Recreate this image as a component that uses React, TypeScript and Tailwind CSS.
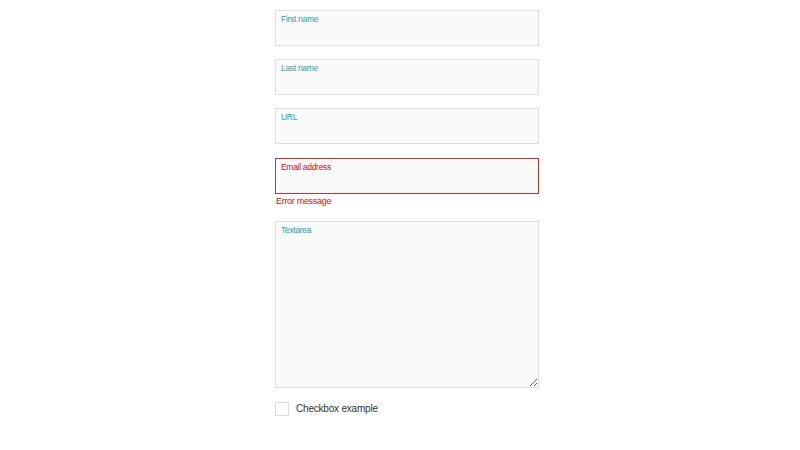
import React from "react";

const font = { fontFamily: '"Liberation Sans", Arial, sans-serif' };

function Field({ label, error, className = "" }: { label: string; error?: string; className?: string }) {
  return (
    <div className={`flex flex-col ${className}`}>
      <div className="relative">
        <label
          className={`absolute left-[6px] top-[5px] text-[8.5px] leading-none tracking-[-0.3px] ${
            error ? "text-[#c01818]" : "text-[#2aa3ad]"
          }`}
        >
          {label}
        </label>
        <input
          className={`block h-[36px] w-full bg-[#fafafa] px-[6px] pt-[12px] text-[9px] outline-none border ${
            error ? "border-[#c43232]" : "border-[#dedede]"
          }`}
        />
      </div>
      {error && (
        <p className="mt-[2px] ml-[1px] text-[9px] leading-[11px] tracking-[-0.3px] text-[#c01818]">
          {error}
        </p>
      )}
    </div>
  );
}

export default function App() {
  return (
    <div className="h-[450px] w-[800px] bg-white" style={font}>
      <form className="ml-[275px] pt-[10px] flex w-[264px] flex-col">
        <div className="flex flex-col gap-[13px]">
          <Field label="First name" />
          <Field label="Last name" />
          <Field label="URL" />
          <Field label="Email address" error="Error message" className="mt-[1px]" />
        </div>
        <div className="relative mt-[14px]">
          <label className="absolute left-[6px] top-[5px] text-[8.5px] leading-none tracking-[-0.3px] text-[#2aa3ad]">
            Textarea
          </label>
          <textarea className="block h-[167px] w-full border border-[#dedede] bg-[#fafafa] px-[6px] pt-[14px] text-[9px] outline-none" />
        </div>
        <label className="mt-[13px] flex items-center gap-[7px]">
          <span className="h-[14px] w-[14px] border border-[#dedede] bg-white" />
          <span className="text-[10px] tracking-[-0.2px] text-[#333]">Checkbox example</span>
        </label>
      </form>
    </div>
  );
}
